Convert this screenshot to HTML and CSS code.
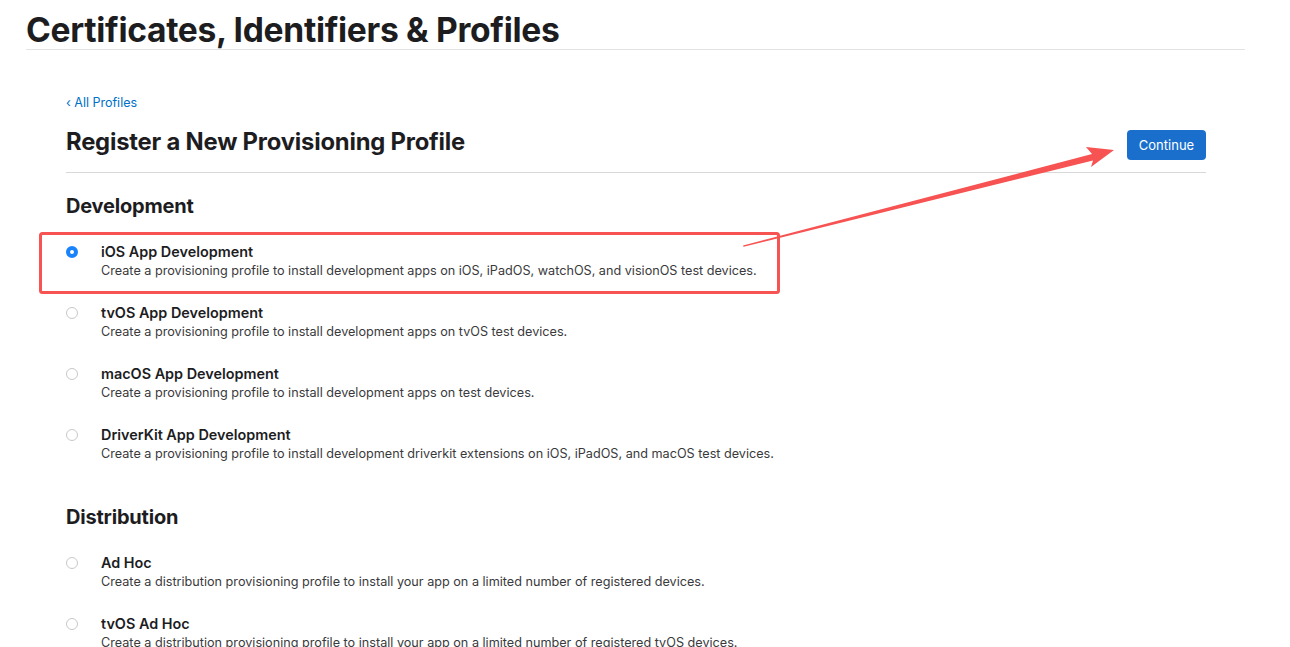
FILE: index.html
```html
<!DOCTYPE html>
<html lang="en">
<head>
<meta charset="utf-8">
<title>Certificates, Identifiers &amp; Profiles</title>
<link rel="stylesheet" href="styles.css">
</head>
<body>
<header class="site-header">
  <h1 class="site-title">Certificates, Identifiers &amp; Profiles</h1>
</header>
<main class="content">
  <a class="back-link" href="#">&lsaquo; All Profiles</a>
  <div class="page-head">
    <h2 class="page-title">Register a New Provisioning Profile</h2>
    <button class="btn-primary" type="button">Continue</button>
  </div>

  <section class="group">
    <h3 class="group-title">Development</h3>
    <ul class="options">
      <li class="option">
        <span class="radio checked"></span>
        <div class="option-text">
          <div class="option-name">iOS App Development</div>
          <div class="option-desc">Create a provisioning profile to install development apps on iOS, iPadOS, watchOS, and visionOS test devices.</div>
        </div>
      </li>
      <li class="option">
        <span class="radio"></span>
        <div class="option-text">
          <div class="option-name">tvOS App Development</div>
          <div class="option-desc">Create a provisioning profile to install development apps on tvOS test devices.</div>
        </div>
      </li>
      <li class="option">
        <span class="radio"></span>
        <div class="option-text">
          <div class="option-name">macOS App Development</div>
          <div class="option-desc">Create a provisioning profile to install development apps on test devices.</div>
        </div>
      </li>
      <li class="option">
        <span class="radio"></span>
        <div class="option-text">
          <div class="option-name">DriverKit App Development</div>
          <div class="option-desc">Create a provisioning profile to install development driverkit extensions on iOS, iPadOS, and macOS test devices.</div>
        </div>
      </li>
    </ul>
  </section>

  <section class="group">
    <h3 class="group-title">Distribution</h3>
    <ul class="options">
      <li class="option">
        <span class="radio"></span>
        <div class="option-text">
          <div class="option-name">Ad Hoc</div>
          <div class="option-desc">Create a distribution provisioning profile to install your app on a limited number of registered devices.</div>
        </div>
      </li>
      <li class="option">
        <span class="radio"></span>
        <div class="option-text">
          <div class="option-name">tvOS Ad Hoc</div>
          <div class="option-desc">Create a distribution provisioning profile to install your app on a limited number of registered tvOS devices.</div>
        </div>
      </li>
    </ul>
  </section>
</main>

<svg class="annotation" width="1290" height="647" viewBox="0 0 1290 647" aria-hidden="true">
  <rect x="40.5" y="233.5" width="738" height="59" rx="2" fill="none" stroke="#f65352" stroke-width="3"/>
  <polygon points="743,245.6 1092,154 1086,147 1114,150 1091,167 1093,160.5 743.6,246.8" fill="#f65352"/>
</svg>
</body>
</html>
```

FILE: styles.css
```css
* { box-sizing: border-box; }

html, body {
  margin: 0;
  padding: 0;
  background: #fff;
}

body {
  font-family: Inter, "Noto Sans", "Liberation Sans", sans-serif;
  color: #1d1d1f;
  width: 1290px;
  height: 647px;
  overflow: hidden;
  position: relative;
}

.site-header {
  margin-left: 26px;
  width: 1219px;
  padding-top: 11px;
  border-bottom: 1px solid #e3e3e3;
}

.site-title {
  margin: 0;
  font-size: 33.6px;
  font-weight: 700;
  line-height: 38px;
  letter-spacing: -0.3px;
}

.content {
  margin-left: 66px;
  width: 1140px;
  padding-top: 41px;
}

.back-link {
  display: inline-block;
  font-size: 12.5px;
  line-height: 16px;
  color: #0070c9;
  text-decoration: none;
}

.page-head {
  display: flex;
  align-items: flex-start;
  justify-content: space-between;
  margin-top: 17px;
  padding-bottom: 12px;
  border-bottom: 1px solid #d8d8d8;
}

.page-title {
  margin: 0;
  font-size: 23.8px;
  font-weight: 700;
  line-height: 28px;
  letter-spacing: -0.2px;
}

.btn-primary {
  margin-top: 2px;
  font-family: inherit;
  font-size: 13px;
  line-height: 16px;
  color: #fff;
  background: #1a6fcd;
  border: none;
  border-radius: 4px;
  padding: 7px 0;
  width: 79px;
  height: 30px;
}

.group-title {
  margin: 20px 0 0;
  font-size: 20px;
  font-weight: 700;
  line-height: 26px;
  letter-spacing: -0.2px;
}

.options {
  list-style: none;
  margin: 23px 0 0;
  padding: 0;
}

.option {
  display: flex;
  align-items: flex-start;
  height: 61px;
}

.radio {
  flex: none;
  width: 12px;
  height: 12px;
  margin-top: 4px;
  border-radius: 50%;
  border: 1px solid #c8c8c8;
  background: #fff;
}

.radio.checked {
  border: 4px solid #1a82fb;
}

.option-text {
  margin-left: 23px;
}

.option-name {
  font-size: 14.4px;
  font-weight: 600;
  line-height: 20px;
}

.option-desc {
  font-size: 12.65px;
  line-height: 18px;
  color: #3a3a3c;
}

.group + .group .group-title {
  margin-top: 18px;
}

.annotation {
  position: absolute;
  left: 0;
  top: 0;
  pointer-events: none;
}
```
